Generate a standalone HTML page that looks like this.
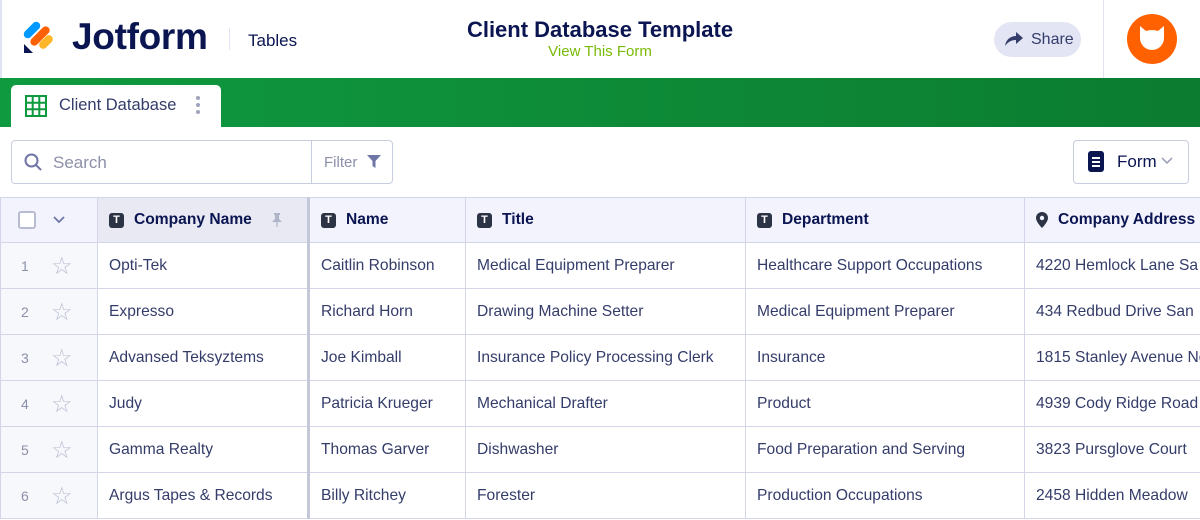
<!DOCTYPE html>
<html><head><meta charset="utf-8"><style>
*{box-sizing:border-box;margin:0;padding:0}
body{width:1200px;height:520px;overflow:hidden;background:#fff;font-family:"Liberation Sans",sans-serif;color:#0a1551;position:relative}
.hdr{position:absolute;left:0;top:0;width:1200px;height:78px;background:#fff;border-left:2px solid #dfe3f3}
.green{position:absolute;left:0;top:78px;width:1200px;height:49px;background:linear-gradient(90deg,#0f9a3f,#0c7c30)}
.tab{position:absolute;left:11px;top:85px;width:210px;height:42px;background:#fff;border-radius:5px 5px 0 0}
.abs{position:absolute}
table{position:absolute;left:0;top:197px;border-collapse:collapse;font-size:15.6px;color:#343c6a;table-layout:fixed;width:1230px}
td,th{border:1px solid #d3d6e8;height:46px;padding:0 0 0 11px;white-space:nowrap;overflow:hidden;text-align:left;vertical-align:middle}
th{background:#f3f3fe;height:45px;font-weight:bold;color:#0a1551;font-size:15.6px}
th .f{display:flex;align-items:center;height:44px}
.T{display:block;flex:none;width:15px;height:15px;background:#2c3345;color:#fff;border-radius:3px;font-size:11px;text-align:center;line-height:15px;margin-right:10px}
.num{background:#f7f8fc;color:#8c90a8;font-size:14px;padding:0;position:relative}
.num b{position:absolute;left:20px;top:15px;font-weight:normal}
.num i{position:absolute;left:50px;top:9px;font-style:normal;font-size:24px;color:#b8bcd0}
.pin{border-right:3px solid #c5c8d9}
</style></head><body>
<div class="hdr"></div>
<svg class="abs" style="left:22px;top:18px" width="34" height="36" viewBox="0 0 34 36">
<rect x="6" y="2" width="8" height="20" rx="4" fill="#0099ff" transform="rotate(45 10 12)"/>
<rect x="14" y="6" width="8" height="24" rx="4" fill="#ff6100" transform="rotate(45 18 18)"/>
<rect x="20" y="16" width="8" height="16" rx="4" fill="#ffb629" transform="rotate(45 24 24)"/>
<path d="M2 26 L2 35 L11 35 Z" fill="#0a1551"/></svg>
<div class="abs" style="left:72px;top:16px;font-size:37px;font-weight:bold;letter-spacing:-0.3px">Jotform</div>
<div class="abs" style="left:229px;top:28px;width:1px;height:22px;background:#dfe3f3"></div>
<div class="abs" style="left:248px;top:31px;font-size:17px;color:#0a1551">Tables</div>
<div class="abs" style="left:0;width:1200px;top:17px;text-align:center;font-size:22px;font-weight:bold">Client Database Template</div>
<div class="abs" style="left:0;width:1200px;top:43px;text-align:center;font-size:15px;color:#78bb07">View This Form</div>
<div class="abs" style="left:994px;top:22px;width:87px;height:35px;border-radius:18px;background:#e3e5f5;color:#343c6a;font-size:16px;padding:9px 0 0 37px">Share</div>
<svg class="abs" style="left:1004px;top:31px" width="20" height="16" viewBox="0 0 20 16"><path d="M1 15 C2 8 7 5 12 5 L12 1 L19 7 L12 13 L12 9 C7 9 4 11 1 15Z" fill="#343c6a"/></svg>
<div class="abs" style="left:1103px;top:0;width:1px;height:78px;background:#dfe3f3"></div>
<div class="abs" style="left:1127px;top:14px;width:50px;height:50px;border-radius:50%;background:#ff6100"></div>
<svg class="abs" style="left:1136px;top:22px" width="32" height="32" viewBox="0 0 32 32"><path d="M4 4 L10 9 Q16 7 22 9 L28 4 L28 16 A12 12 0 0 1 4 16Z" fill="#fff"/></svg>
<div class="green"></div>
<div class="tab"></div>
<svg class="abs" style="left:25px;top:95px" width="22" height="22" viewBox="0 0 22 22"><rect x="1" y="1" width="20" height="20" fill="none" stroke="#0f9a3f" stroke-width="2"/><path d="M7.7 1V21M14.3 1V21M1 7.7H21M1 14.3H21" stroke="#0f9a3f" stroke-width="2"/></svg>
<div class="abs" style="left:59px;top:96px;font-size:16.5px;color:#343c6a">Client Database</div>
<div class="abs" style="left:196px;top:96px;width:4px;font-size:0"><div style="width:4px;height:4px;border-radius:2px;background:#a0a4bc;margin-bottom:3px"></div><div style="width:4px;height:4px;border-radius:2px;background:#a0a4bc;margin-bottom:3px"></div><div style="width:4px;height:4px;border-radius:2px;background:#a0a4bc"></div></div>
<div class="abs" style="left:11px;top:140px;width:382px;height:44px;border:1px solid #c8ccdf;border-radius:4px"></div>
<div class="abs" style="left:311px;top:140px;width:1px;height:44px;background:#c8ccdf"></div>
<svg class="abs" style="left:24px;top:153px" width="18" height="18" viewBox="0 0 18 18"><circle cx="7.5" cy="7.5" r="6" fill="none" stroke="#6f76a7" stroke-width="2"/><path d="M12 12L17 17" stroke="#6f76a7" stroke-width="2"/></svg>
<div class="abs" style="left:53px;top:153px;font-size:17px;color:#8c90a8">Search</div>
<div class="abs" style="left:324px;top:154px;font-size:15px;color:#8c90a8">Filter</div>
<svg class="abs" style="left:367px;top:155px" width="14" height="13" viewBox="0 0 14 13"><path d="M0 0H14L8.5 6V13L5.5 11V6Z" fill="#6f76a7"/></svg>
<div class="abs" style="left:1073px;top:140px;width:116px;height:44px;border:1px solid #c8ccdf;border-radius:4px"></div>
<div class="abs" style="left:1088px;top:151px;width:16px;height:21px;border-radius:3px;background:#0a1551"></div>
<div class="abs" style="left:1092px;top:157px;width:8px;height:2px;background:#fff;box-shadow:0 4px #fff,0 8px #fff"></div>
<div class="abs" style="left:1117px;top:152px;font-size:17px;color:#0a1551">Form</div>
<svg class="abs" style="left:1161px;top:157px" width="12" height="8" viewBox="0 0 12 8"><path d="M1 1L6 6L11 1" fill="none" stroke="#a0a4bc" stroke-width="1.6"/></svg>
<table>
<colgroup><col style="width:97px"><col style="width:211px"><col style="width:157px"><col style="width:280px"><col style="width:279px"><col style="width:206px"></colgroup>
<tr><th style="padding:0"><div class="f"><span style="display:block;width:18px;height:18px;border:2px solid #b8bcd0;border-radius:3px;background:#fff;margin-left:17px"></span><svg style="margin-left:17px" width="12" height="8" viewBox="0 0 12 8"><path d="M1 1L6 6L11 1" fill="none" stroke="#6f76a7" stroke-width="1.8"/></svg></div></th>
<th class="pin" style="background:#e8e9f3"><div class="f"><span class="T">T</span>Company Name<svg style="margin-left:20px" width="10" height="14" viewBox="0 0 10 14"><path d="M2 0H8V2H7V6L10 9H5.6V14H4.4V9H0L3 6V2H2Z" fill="#b0b4c8"/></svg></div></th>
<th><div class="f"><span class="T">T</span>Name</div></th>
<th><div class="f"><span class="T">T</span>Title</div></th>
<th><div class="f"><span class="T">T</span>Department</div></th>
<th><div class="f"><svg style="margin-right:10px;flex:none" width="12" height="16" viewBox="0 0 12 16"><path d="M6 0A6 6 0 0 1 12 6C12 10 6 16 6 16S0 10 0 6A6 6 0 0 1 6 0Z" fill="#2c3345"/><circle cx="6" cy="6" r="2.2" fill="#f3f3fe"/></svg>Company Address</div></th></tr>
<tr><td class="num"><b>1</b><i>☆</i></td><td class="pin">Opti-Tek</td><td>Caitlin Robinson</td><td>Medical Equipment Preparer</td><td>Healthcare Support Occupations</td><td>4220 Hemlock Lane Sa</td></tr>
<tr><td class="num"><b>2</b><i>☆</i></td><td class="pin">Expresso</td><td>Richard Horn</td><td>Drawing Machine Setter</td><td>Medical Equipment Preparer</td><td>434 Redbud Drive San</td></tr>
<tr><td class="num"><b>3</b><i>☆</i></td><td class="pin">Advansed Teksyztems</td><td>Joe Kimball</td><td>Insurance Policy Processing Clerk</td><td>Insurance</td><td>1815 Stanley Avenue Ne</td></tr>
<tr><td class="num"><b>4</b><i>☆</i></td><td class="pin">Judy</td><td>Patricia Krueger</td><td>Mechanical Drafter</td><td>Product</td><td>4939 Cody Ridge Road</td></tr>
<tr><td class="num"><b>5</b><i>☆</i></td><td class="pin">Gamma Realty</td><td>Thomas Garver</td><td>Dishwasher</td><td>Food Preparation and Serving</td><td>3823 Pursglove Court</td></tr>
<tr><td class="num"><b>6</b><i>☆</i></td><td class="pin">Argus Tapes &amp; Records</td><td>Billy Ritchey</td><td>Forester</td><td>Production Occupations</td><td>2458 Hidden Meadow</td></tr>
</table>
</body></html>
